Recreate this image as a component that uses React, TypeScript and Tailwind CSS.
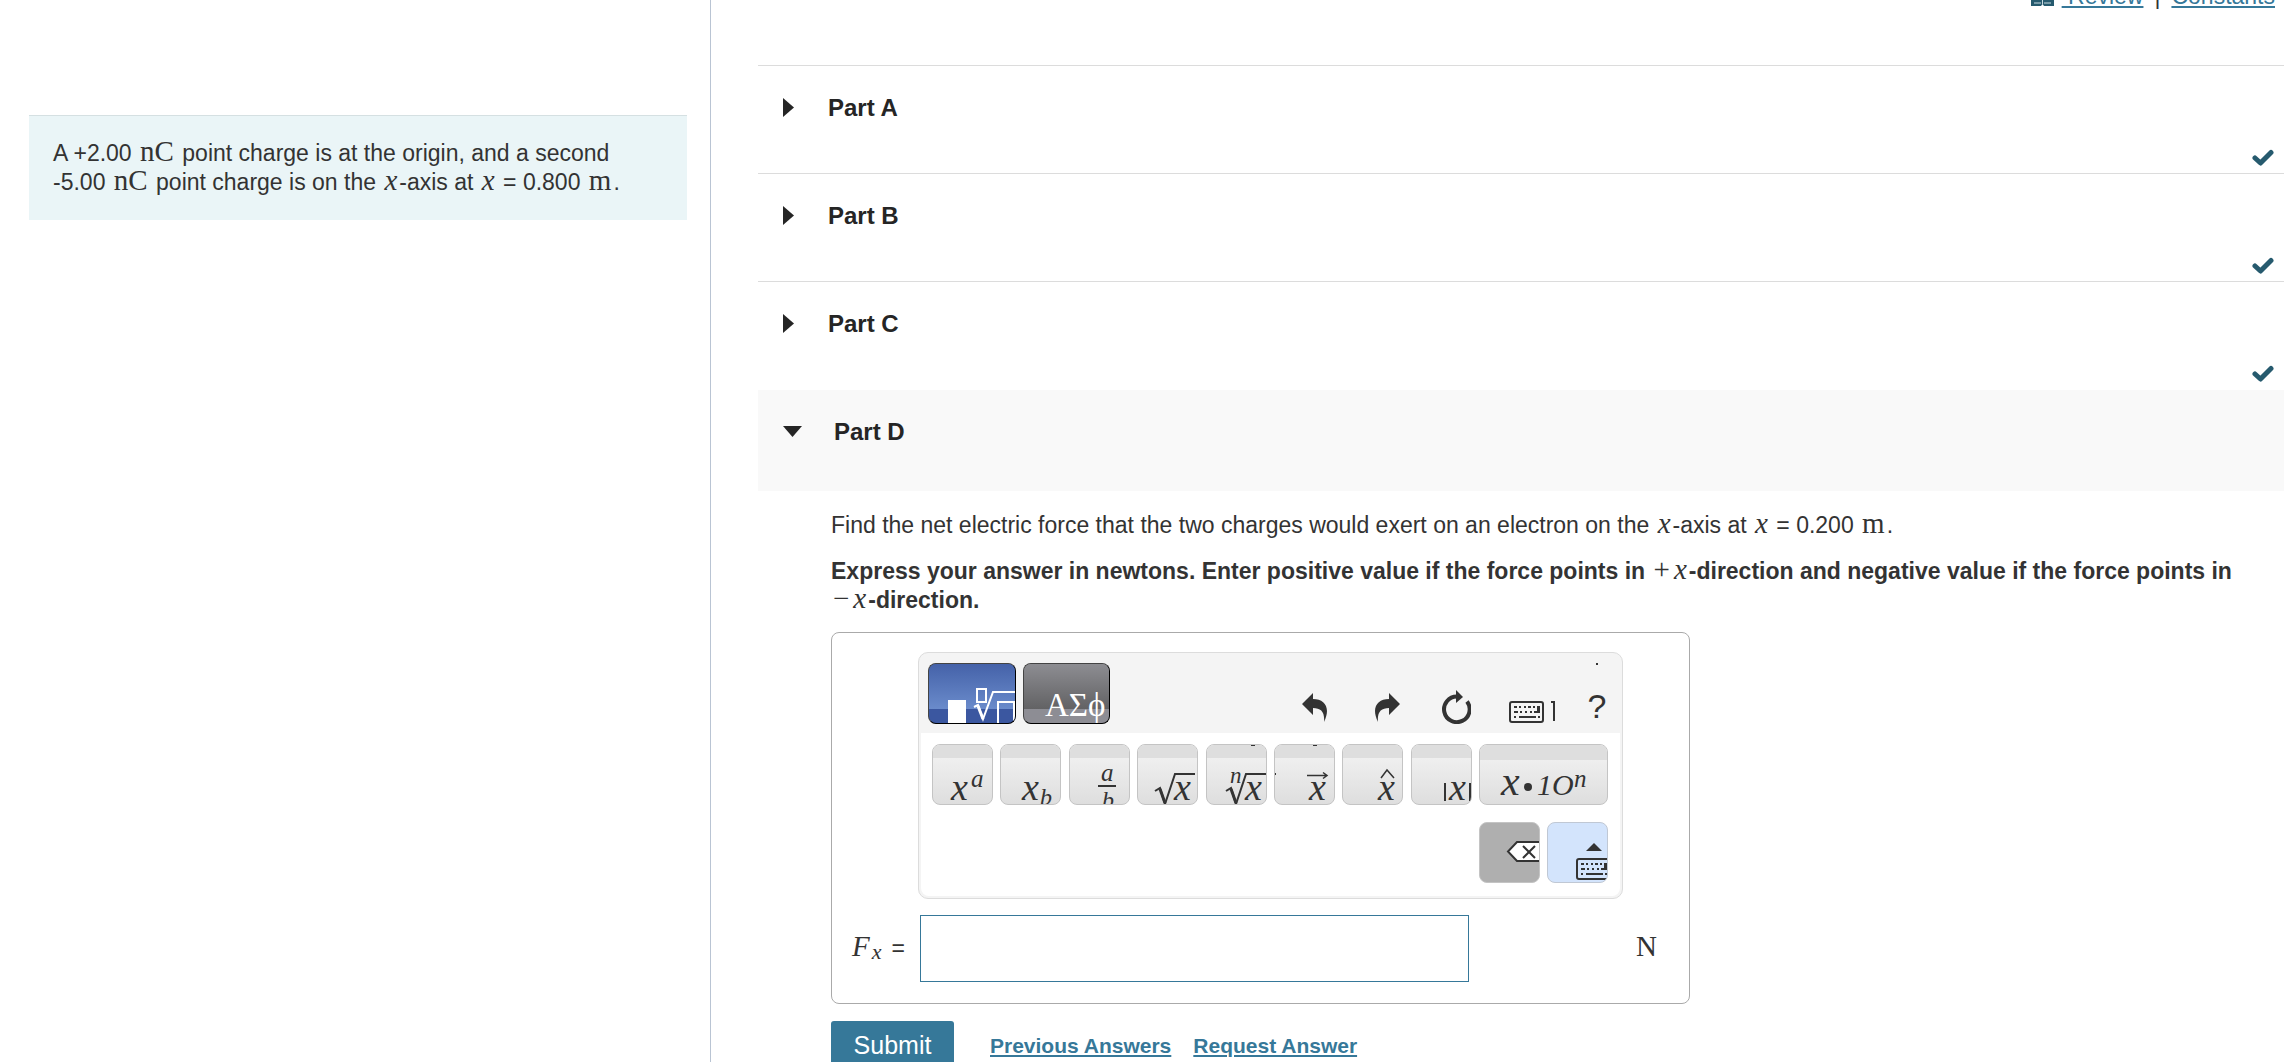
import { useState, type ReactNode } from 'react';

const completedParts = ['Part A', 'Part B', 'Part C'];

// TeX-like inline symbols
function Unit({ children }: { children: ReactNode }) {
  return <span className="font-['Liberation_Serif',serif] text-[29px] leading-0 font-normal mx-[2px]">{children}</span>;
}

function Var({ children }: { children: ReactNode }) {
  return <i className="font-['Liberation_Serif',serif] text-[29px] leading-0 font-normal mx-[2px]">{children}</i>;
}

function CheckIcon() {
  return (
    <svg viewBox="0 0 22 17" className="w-[22px] h-[17px]" aria-label="Completed">
      <path d="M3 9 L8.500 14 L19 3.500" fill="none" stroke="#265a6e" strokeWidth="5" strokeLinejoin="round" strokeLinecap="round" />
    </svg>
  );
}

function KeyboardShape() {
  return (
    <g>
      <rect x="1" y="1" width="33" height="20" rx="2" fill="none" stroke="#333" strokeWidth="2" />
      <path d="M5 6h3M10 6h2M15 6h2M19 6h3M24 6h2" stroke="#333" strokeWidth="2" />
      <path d="M5 11h4M11 11h2M16 11h2M21 11h2M25 11h6" stroke="#333" strokeWidth="2" />
      <path d="M5 16h2M10 16h17M29 16h2" stroke="#333" strokeWidth="2" />
      <rect x="28" y="5" width="3" height="7" fill="#333" />
    </g>
  );
}

function Key({ label, children }: { label: string; children: ReactNode }) {
  return (
    <button
      type="button"
      aria-label={label}
      className="w-[61px] h-[61px] shrink-0 overflow-hidden rounded-lg border border-[#c4c4c4] bg-linear-to-b from-[#f4f4f4] to-[#dedede]"
    >
      <svg viewBox="1 1 59 59" className="block w-full h-full font-['Liberation_Serif',serif] italic" fill="#333">
        <rect x="0" y="0" width="61" height="14" fill="#dedede" />
        {children}
      </svg>
    </button>
  );
}

function Keypad() {
  return (
    <div className="w-[705px] h-[247px] rounded-[10px] border border-[#dcdcdc] bg-[#f4f4f4] px-[2px] pb-[2px] flex flex-col">
      <div className="h-20 flex items-start justify-between pl-[7px] pr-[2px] pt-[10px]">
        <div className="flex gap-[7px]">
          <button
            type="button"
            aria-label="Templates"
            className="w-[88px] h-[61px] overflow-hidden rounded-lg border border-t-[#444] border-l-[#444] border-black bg-[#3b57a0]"
          >
            <svg viewBox="1 1 86 59" className="block w-full h-full">
              <defs>
                <linearGradient id="blueKey" x1="0" y1="0" x2="0" y2="1">
                  <stop offset="0" stopColor="#4461a8" />
                  <stop offset="1" stopColor="#6a8bcb" />
                </linearGradient>
              </defs>
              <rect width="88" height="46" fill="url(#blueKey)" />
              <rect x="20" y="37" width="18" height="24" fill="#fff" />
              <rect x="49" y="26" width="9" height="13" fill="none" stroke="#fff" strokeWidth="2" />
              <path d="M46 44 L50 42 L55 56 L65 29 H88" fill="none" stroke="#fff" strokeWidth="2" />
              <path d="M50 43 L55 56" stroke="#fff" strokeWidth="3" />
              <path d="M70 61 V39 H86 V61" fill="none" stroke="#fff" strokeWidth="2" />
            </svg>
          </button>
          <button
            type="button"
            aria-label="Symbols"
            className="w-[87px] h-[61px] overflow-hidden rounded-lg border border-t-[#444] border-l-[#444] border-black bg-[#8d8d94]"
          >
            <svg viewBox="1 1 85 59" className="block w-full h-full">
              <defs>
                <linearGradient id="greyKey" x1="0" y1="0" x2="0" y2="1">
                  <stop offset="0" stopColor="#8e8e93" />
                  <stop offset="1" stopColor="#626264" />
                </linearGradient>
              </defs>
              <rect width="88" height="46" fill="url(#greyKey)" />
              <text x="22" y="53" fontSize="33" fill="#fff" className="font-['Liberation_Serif',serif]">ΑΣϕ</text>
            </svg>
          </button>
        </div>
        <div className="flex items-start pt-[22px]">
          <button type="button" aria-label="Undo" className="w-[70px] flex justify-center pt-[7px]">
            <svg viewBox="0 0 26 30" className="w-[26px] h-[30px]" fill="#333">
              <path d="M0 12 L11 1 V7 C23 7 29 16 22 30 C23 20 19 16 11 16 V23 Z" />
            </svg>
          </button>
          <button type="button" aria-label="Redo" className="w-[74px] flex justify-center pt-[7px]">
            <svg viewBox="0 0 26 30" className="w-[26px] h-[30px]" fill="#333">
              <path d="M26 12 L15 1 V7 C3 7 -3 16 4 30 C3 20 7 16 15 16 V23 Z" />
            </svg>
          </button>
          <button type="button" aria-label="Reset" className="w-[64px] flex justify-center pt-[5px]">
            <svg viewBox="0 0 30 34" className="w-[30px] h-[34px]">
              <path d="M16 6.500 A12.800 12.800 0 1 0 26 11.500" fill="none" stroke="#333" strokeWidth="4" />
              <path d="M15 0 L22 7 L15 13 Z" fill="#333" />
            </svg>
          </button>
          <button type="button" aria-label="Keyboard shortcuts" className="w-[88px] flex justify-center pt-[16px]">
            <svg viewBox="0 0 47 22" className="w-[47px] h-[22px]">
              <KeyboardShape />
              <path d="M42 1 H45 V20" fill="none" stroke="#333" strokeWidth="2" />
            </svg>
          </button>
          <button type="button" aria-label="Help" className="relative w-[42px] pt-[4px] text-[34px] leading-[34px] text-[#333]">
            <span className="absolute -top-[22px] left-5 w-[2px] h-[2px] bg-[#333]" />
            ?
          </button>
        </div>
      </div>
      <div className="grow bg-white pl-[11px] pt-[11px] rounded-b-lg">
        <div className="w-[676px] flex flex-col gap-[17px]">
          <div className="flex justify-between">
            <Key label="Superscript">
              <text x="19" y="56" fontSize="38">x</text>
              <text x="39" y="43" fontSize="25">a</text>
            </Key>
            <Key label="Subscript">
              <text x="22" y="56" fontSize="38">x</text>
              <text x="40" y="61" fontSize="24">b</text>
            </Key>
            <Key label="Fraction">
              <text x="32" y="37" fontSize="25">a</text>
              <rect x="29" y="41" width="18" height="2" />
              <text x="33" y="64" fontSize="24">b</text>
            </Key>
            <Key label="Square root">
              <path d="M18 47 L23 44 L28 60 L38 30 H58" fill="none" stroke="#333" strokeWidth="2" />
              <path d="M23 45 L28 59" stroke="#333" strokeWidth="3" />
              <text x="37" y="56" fontSize="38">x</text>
            </Key>
            <Key label="Nth root">
              <path d="M45 1 h4" stroke="#333" strokeWidth="2" />
              <text x="24" y="39" fontSize="23">n</text>
              <path d="M20 47 L25 44 L30 60 L40 30 H61" fill="none" stroke="#333" strokeWidth="2" />
              <path d="M25 45 L30 59" stroke="#333" strokeWidth="3" />
              <text x="39" y="56" fontSize="38">x</text>
            </Key>
            <Key label="Vector">
              <path d="M39 1 h4M0 30 h2" stroke="#333" strokeWidth="2" />
              <path d="M33 31.500 H53 M49 28.500 L53 31.500 L49 34.500" fill="none" stroke="#333" strokeWidth="1.500" />
              <text x="35" y="56" fontSize="38">x</text>
            </Key>
            <Key label="Unit vector">
              <path d="M39 34 L45 26 L52 34" fill="none" stroke="#333" strokeWidth="1.500" />
              <text x="36" y="56" fontSize="38">x</text>
            </Key>
            <Key label="Absolute value">
              <path d="M34 39 V57 M59 39 V57" stroke="#333" strokeWidth="2" />
              <text x="38" y="56" fontSize="38">x</text>
            </Key>
            <button
              type="button"
              aria-label="Scientific notation"
              className="w-[129px] h-[61px] overflow-hidden rounded-lg border border-[#c4c4c4] bg-linear-to-b from-[#f4f4f4] to-[#dedede]"
            >
              <svg viewBox="1 1 127 59" className="block w-full h-full font-['Liberation_Serif',serif] italic" fill="#333">
                <rect width="129" height="16" fill="#dedede" />
                <text x="22" y="51" fontSize="42">x</text>
                <circle cx="49" cy="43" r="4" />
                <text x="58" y="51" fontSize="30">1O</text>
                <text x="95" y="43" fontSize="25">n</text>
              </svg>
            </button>
          </div>
          <div className="flex justify-end gap-[7px]">
            <button type="button" aria-label="Backspace" className="w-[61px] h-[61px] overflow-hidden rounded-lg border border-[#c4c4c4] bg-[#afafaf]">
              <svg viewBox="1 1 59 59" className="block w-full h-full">
                <path d="M62 20 H38 L29 29.500 L38 39 H62" fill="#fff" stroke="#333" strokeWidth="2" />
                <path d="M44 24 L56 36 M56 24 L44 36" stroke="#333" strokeWidth="2" />
              </svg>
            </button>
            <button type="button" aria-label="Hide keypad" className="w-[61px] h-[61px] overflow-hidden rounded-lg border border-[#c0c8d4] bg-[#d3e4fc]">
              <svg viewBox="1 1 59 59" className="block w-full h-full">
                <path d="M39 29 L47 21 L55 29 Z" fill="#333" />
                <g transform="translate(29 36)">
                  <KeyboardShape />
                </g>
              </svg>
            </button>
          </div>
        </div>
      </div>
    </div>
  );
}

export default function App() {
  const [answer, setAnswer] = useState('');

  return (
    <div className="h-screen overflow-hidden flex bg-white text-[#333] font-['Liberation_Sans',Arial,sans-serif] text-[23px] leading-[29px]">
      <aside className="w-[711px] shrink-0 border-r border-[#b9c4d3] pl-[29px] pr-[23px] pt-[115px]">
        <p className="bg-[#eaf5f7] border-t border-[#d5e0e2] pl-6 pr-9 pt-[23px] pb-[23px]">
          A +2.00 <Unit>nC</Unit> point charge is at the origin, and a second -5.00 <Unit>nC</Unit> point charge is on the{' '}
          <Var>x</Var>-axis at <Var>x</Var> = 0.800 <Unit>m</Unit>.
        </p>
      </aside>

      <main className="grow min-w-0 pl-[47px]">
        <div className="h-[65px] pr-[9px] flex justify-end items-start">
          <nav className="flex items-center -mt-[18px]">
            <svg viewBox="0 0 23 18" className="w-[23px] h-[18px] mr-2" fill="#265a6e">
              <path d="M0 0 H10 L11.500 2 L13 0 H23 V18 H13 L11.500 16 L10 18 H0 Z" />
              <path d="M11.500 2 V16 M3 15 H10 M13 15 H20" stroke="#c9dbe1" />
            </svg>
            <a href="#review" className="text-[#367899] underline underline-offset-2 decoration-2 whitespace-pre"> Review</a>
            <span className="mx-[11px]">|</span>
            <a href="#constants" className="text-[#367899] underline underline-offset-2 decoration-2">Constants</a>
          </nav>
        </div>

        {completedParts.map((part) => (
          <section key={part} className="h-[108px] border-t border-[#dcdcdc] flex justify-between pl-[25px] pr-[10px]">
            <button type="button" className="flex items-center gap-[34px] h-[29px] mt-[27px] text-2xl font-bold text-[#252525]">
              <svg viewBox="0 0 11 19" className="w-[11px] h-[19px]" fill="#252525">
                <path d="M0 0 L11 9.500 L0 19 Z" />
              </svg>
              {part}
            </button>
            <div className="self-end pb-[7px]">
              <CheckIcon />
            </div>
          </section>
        ))}

        <section>
          <div className="bg-[#f9f9f9] mt-px h-[101px] pl-[25px] pt-[27px]">
            <button type="button" className="flex items-center gap-8 h-[29px] text-2xl font-bold text-[#252525]">
              <svg viewBox="0 0 19 11" className="w-[19px] h-[11px]" fill="#252525">
                <path d="M0 0 H19 L9.500 11 Z" />
              </svg>
              Part D
            </button>
          </div>

          <div className="pl-[73px] pt-5">
            <p>
              Find the net electric force that the two charges would exert on an electron on the <Var>x</Var>-axis at <Var>x</Var> = 0.200{' '}
              <Unit>m</Unit>.
            </p>
            <p className="mt-[17px] font-bold">
              Express your answer in newtons. Enter positive value if the force points in <Unit>+</Unit>
              <Var>x</Var>-direction and negative value if the force points in{' '}
              <span className="whitespace-nowrap">
                <Unit>−</Unit>
                <Var>x</Var>-direction.
              </span>
            </p>

            <form onSubmit={(e) => e.preventDefault()}>
              <div className="w-[859px] mt-[17px] border border-[#aaa] rounded-lg pt-[19px] pb-[21px]">
                <div className="pl-[86px]">
                  <Keypad />
                </div>
                <div className="flex items-center mt-4 pl-[18px]">
                  <label htmlFor="answer" className="w-[70px] whitespace-nowrap">
                    <Var>F</Var>
                    <i className="font-['Liberation_Serif',serif] text-[22px] leading-0 align-[-3px] mr-[10px]">x</i>=
                  </label>
                  <input
                    id="answer"
                    value={answer}
                    onChange={(e) => setAnswer(e.target.value)}
                    className="w-[549px] h-[67px] border border-[#367899] px-3 outline-none"
                  />
                  <span className="ml-[165px]">
                    <Unit>N</Unit>
                  </span>
                </div>
              </div>

              <div className="mt-[17px] flex items-center gap-[22px]">
                <button type="submit" className="w-[123px] h-12 mr-[14px] rounded-[3px] bg-[#367899] text-white text-[25px]">
                  Submit
                </button>
                <a href="#previous" className="text-[#367899] text-[21px] font-bold underline underline-offset-2 decoration-2">
                  Previous Answers
                </a>
                <a href="#request" className="text-[#367899] text-[21px] font-bold underline underline-offset-2 decoration-2">
                  Request Answer
                </a>
              </div>
            </form>
          </div>
        </section>
      </main>
    </div>
  );
}
